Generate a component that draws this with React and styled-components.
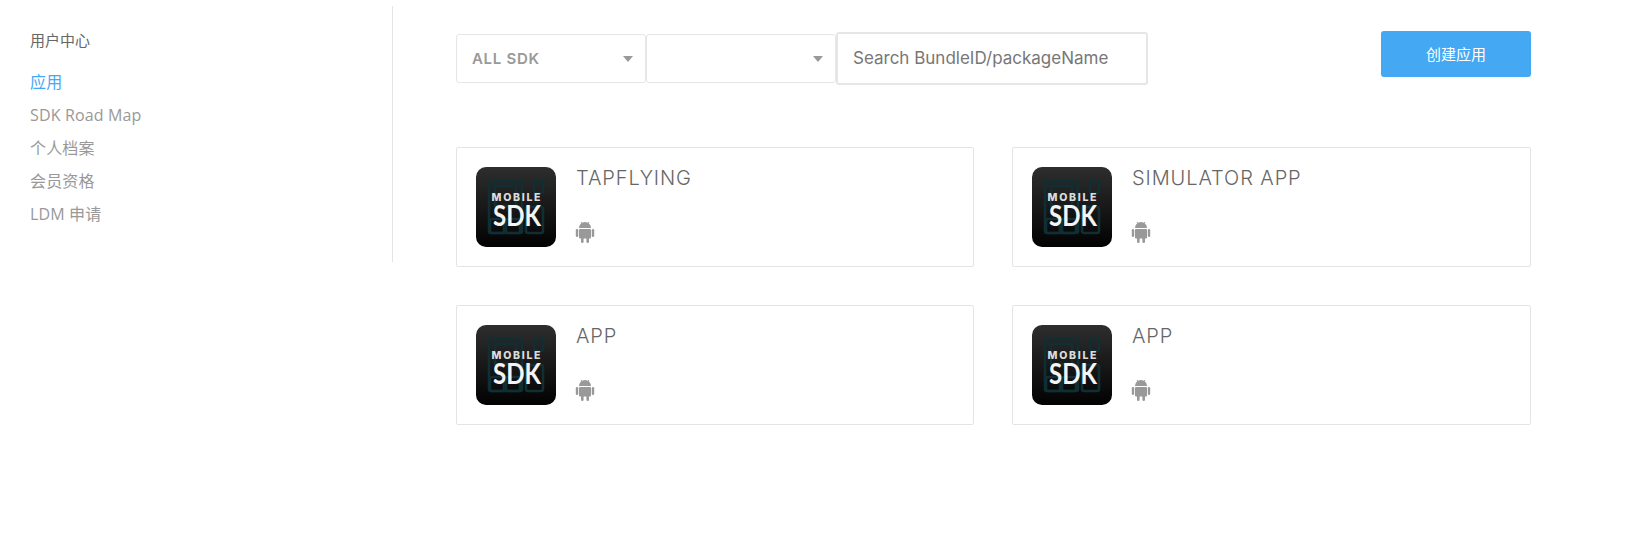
import React from "react";
import styled, { createGlobalStyle } from "styled-components";

const Global = createGlobalStyle`
  html, body { margin: 0; padding: 0; background: #fff; }
  body { font-family: "Open Sans", "Noto Sans CJK SC", sans-serif; }
`;
const Page = styled.div`
  display: flex;
  align-items: flex-start;
  width: 1639px;
  height: 533px;
  overflow: hidden;
`;
const Sidebar = styled.aside`
  box-sizing: border-box;
  width: 393px;
  height: 256px;
  margin-top: 6px;
  padding: 24px 0 0 30px;
  border-right: 1px solid #e4e4e4;
  flex: none;
`;
const SideTitle = styled.div`
  font-size: 15px;
  line-height: 20px;
  color: #666;
  margin-bottom: 16px;
`;
const SideItem = styled.div`
  font-size: 16px;
  letter-spacing: 0.15px;
  line-height: 33px;
  color: ${(p) => (p.$active ? "#44a8f2" : "#999")};
`;
const Main = styled.main`
  box-sizing: border-box;
  width: 1075px;
  margin-left: 63px;
  flex: none;
`;
const Toolbar = styled.div`
  display: flex;
  align-items: flex-start;
  height: 147px;
  padding-top: 31px;
  box-sizing: border-box;
`;
const Select = styled.div`
  box-sizing: border-box;
  width: 190px;
  height: 49px;
  margin-top: 3px;
  border: 1px solid #e6e6e6;
  border-radius: 3px;
  display: flex;
  align-items: center;
  justify-content: space-between;
  padding: 0 12px 0 15px;
  font-family: Inter, sans-serif;
  font-size: 15px;
  letter-spacing: 0.7px;
  font-weight: 600;
  color: #999;
`;
const Caret = styled.span`
  width: 0;
  height: 0;
  border-left: 5px solid transparent;
  border-right: 5px solid transparent;
  border-top: 6px solid #999;
`;
const Search = styled.div`
  box-sizing: border-box;
  width: 312px;
  height: 53px;
  margin-top: 1px;
  padding: 0 15px 2px;
  border: 2px solid #e6e6e6;
  border-radius: 3px;
  display: flex;
  align-items: center;
  font-family: Inter, sans-serif;
  font-size: 17px;
  color: #777;
`;
const CreateButton = styled.button`
  width: 150px;
  height: 46px;
  margin-left: auto;
  padding: 0 0 2px;
  border: 0;
  border-radius: 3px;
  background: #44a8f2;
  color: #fff;
  font-family: "Open Sans", "Noto Sans CJK SC", sans-serif;
  font-size: 15px;
`;
const Grid = styled.div`
  display: grid;
  grid-template-columns: 518px 519px;
  column-gap: 38px;
  row-gap: 38px;
`;
const Card = styled.div`
  box-sizing: border-box;
  height: 120px;
  border: 1px solid #e4e4e4;
  border-radius: 2px;
  padding: 19px;
  display: flex;
  gap: 20px;
`;
const Info = styled.div`
  display: flex;
  flex-direction: column;
  align-items: flex-start;
`;
const Name = styled.div`
  font-family: Inter, sans-serif;
  font-size: 20px;
  font-weight: 300;
  letter-spacing: 0.9px;
  line-height: 22px;
  color: #666;
  margin-bottom: 32px;
`;
const AndroidGlyph = styled.svg`
  margin-left: -1px;
  fill: #999;
`;

const Logo = () => (
  <svg width="80" height="80" viewBox="0 0 80 80" style={{ flex: "none" }}>
    <defs>
      <linearGradient id="logoBg" x1="0" y1="0" x2="0" y2="1">
        <stop offset="0" stopColor="#2e2e2e" />
        <stop offset="1" stopColor="#020202" />
      </linearGradient>
    </defs>
    <rect width="80" height="80" rx="10" fill="url(#logoBg)" />
    <g fill="none" stroke="#0f2f35" strokeWidth="2.6">
      <rect x="13" y="14" width="33" height="52" rx="2" />
      <rect x="19" y="19" width="21" height="20" />
      <rect x="58" y="14" width="9" height="12" rx="2" />
      <rect x="50" y="40" width="17" height="26" rx="2" />
      <rect x="14" y="52" width="14" height="14" rx="2" />
      <rect x="30" y="52" width="14" height="14" rx="2" />
    </g>
    <text x="15.5" y="34" textLength="49" lengthAdjust="spacing" fontFamily="Inter, sans-serif" fontWeight="800" fontSize="10.5" fill="#dcdcdc">MOBILE</text>
    <text x="17" y="59" textLength="48" lengthAdjust="spacingAndGlyphs" fontFamily="Lato, sans-serif" fontWeight="700" fontSize="29" fill="#f4f4f4">SDK</text>
  </svg>
);

const Android = () => (
  <AndroidGlyph width="20" height="22" viewBox="0 0 20 22">
    <path d="M4 7a6 6 0 0 1 12 0z" />
    <path d="M6 1l2 2.5M14 1l-2 2.5" stroke="#999" strokeWidth="1" />
    <rect x="4" y="8" width="12" height="9.5" rx="1" />
    <rect x="0.8" y="8" width="2.4" height="8" rx="1.2" />
    <rect x="16.8" y="8" width="2.4" height="8" rx="1.2" />
    <rect x="6" y="16" width="2.6" height="6" rx="1.3" />
    <rect x="11.4" y="16" width="2.6" height="6" rx="1.3" />
  </AndroidGlyph>
);

const apps = ["TAPFLYING", "SIMULATOR APP", "APP", "APP"];
const menu = ["应用", "SDK Road Map", "个人档案", "会员资格", "LDM 申请"];

export default function App() {
  return (
    <Page>
      <Global />
      <Sidebar>
        <SideTitle>用户中心</SideTitle>
        {menu.map((m, i) => (
          <SideItem key={m} $active={i === 0}>{m}</SideItem>
        ))}
      </Sidebar>
      <Main>
        <Toolbar>
          <Select>ALL SDK<Caret /></Select>
          <Select><span /><Caret /></Select>
          <Search>Search BundleID/packageName</Search>
          <CreateButton>创建应用</CreateButton>
        </Toolbar>
        <Grid>
          {apps.map((a, i) => (
            <Card key={i}>
              <Logo />
              <Info>
                <Name>{a}</Name>
                <Android />
              </Info>
            </Card>
          ))}
        </Grid>
      </Main>
    </Page>
  );
}
